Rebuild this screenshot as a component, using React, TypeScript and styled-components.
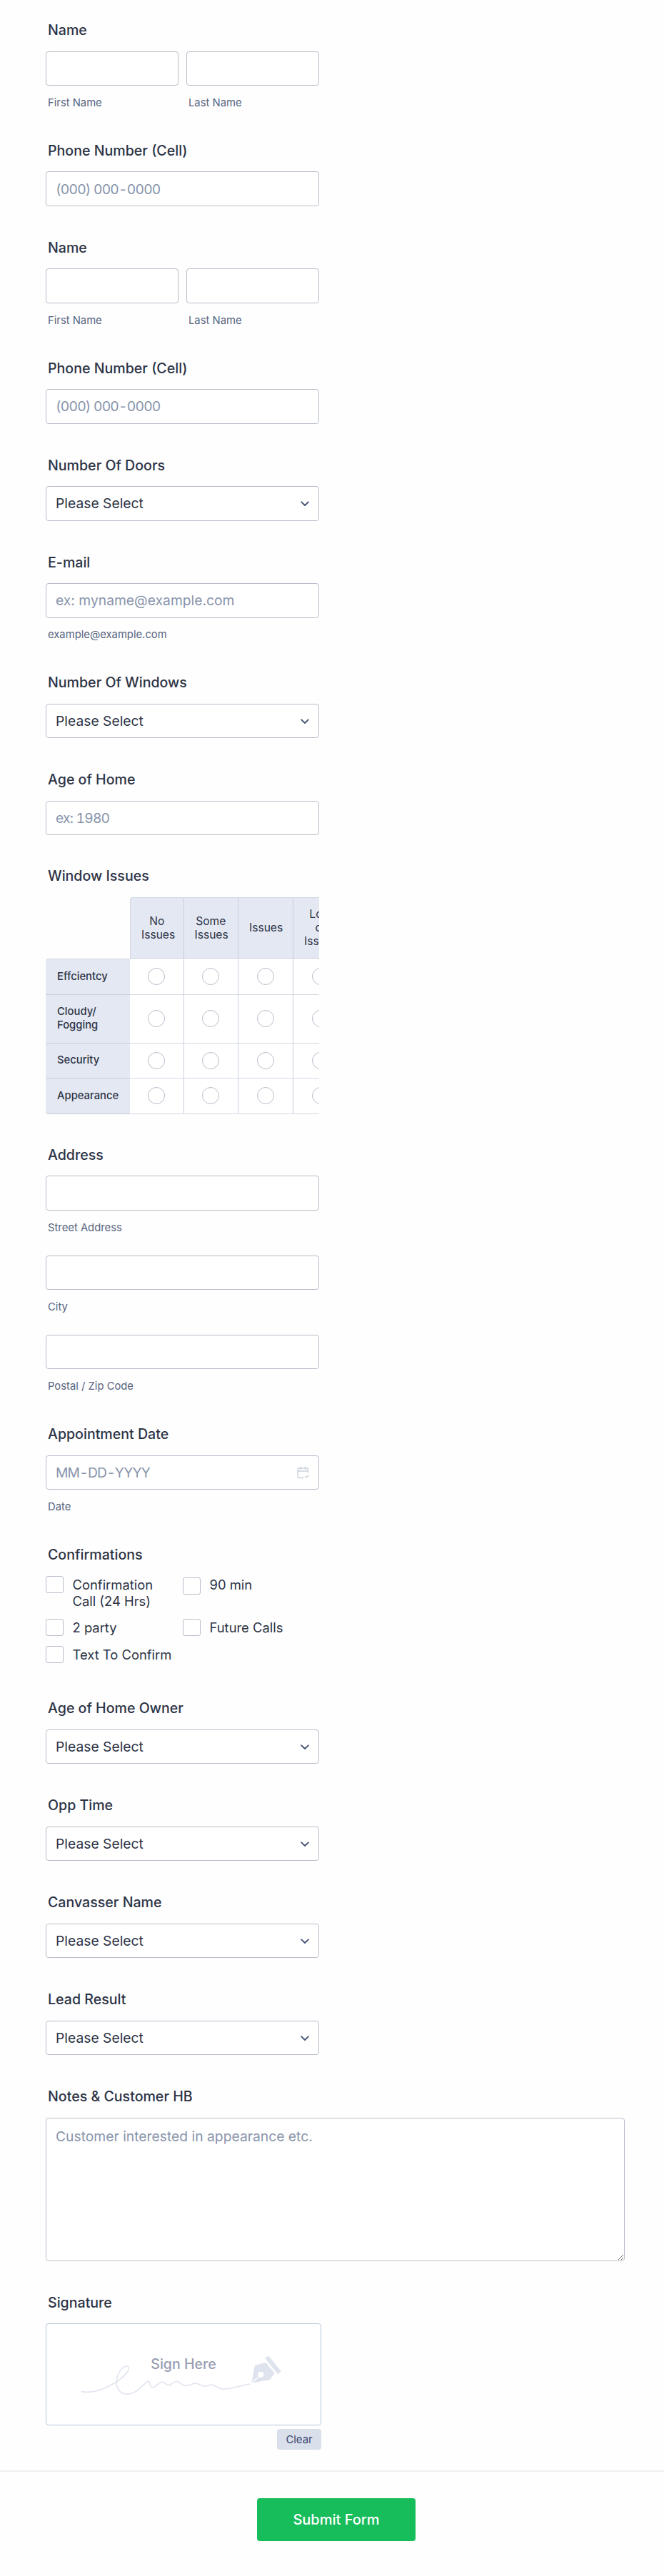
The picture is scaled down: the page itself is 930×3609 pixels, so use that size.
import styled, { createGlobalStyle } from "styled-components";

const GlobalStyle = createGlobalStyle`
  html, body {
    margin: 0;
    padding: 0;
    background: #fff;
  }
  * {
    box-sizing: border-box;
  }
`;

const Chevron = () => (
  <ChevronIcon viewBox="0 0 12 8" fill="none">
    <path d="M1.2 1.4 6 6l4.8-4.6" stroke="#4a5578" strokeWidth="2" strokeLinecap="round" strokeLinejoin="round" />
  </ChevronIcon>
);

const CalendarCheck = () => (
  <CalendarIconWrap viewBox="0 0 17 18" fill="none">
    <path
      d="M15.5 9V4.5a1.5 1.5 0 0 0-1.5-1.5H2.5A1.5 1.5 0 0 0 1 4.5V15a1.5 1.5 0 0 0 1.5 1.5H9M1 7h14.5M5 1v3.5M11.5 1v3.5M11.5 14.5l1.6 1.6 3-3.3"
      stroke="#c9ced9"
      strokeWidth="1.3"
      strokeLinecap="round"
      strokeLinejoin="round"
    />
  </CalendarIconWrap>
);

const SignatureDrawing = () => (
  <SignatureSvg viewBox="340 355 850 175" fill="none">
    <path
      d="M345 510C390 520 440 500 490 470C520 450 550 420 540 405C520 395 495 430 490 465C487 500 510 525 545 520C580 515 600 480 625 465C635 480 630 500 650 490C665 482 672 468 685 470C700 475 705 490 720 480C735 465 750 462 765 480C780 492 800 480 820 475C840 475 850 495 875 485C895 475 905 490 935 500C970 500 1010 485 1050 478"
      stroke="#e1e5ef"
      strokeWidth="5"
      strokeLinecap="round"
    />
    <path d="M1058 474 1072 400 1118 388 1155 432 1135 460Z" fill="#dfe3ee" />
    <path d="M1115 370 1130 360 1183 425 1168 437Z" fill="#dfe3ee" />
    <circle cx="1097" cy="438" r="12" fill="#fff" />
    <path d="M1060 472 1092 444" stroke="#fff" strokeWidth="4" />
  </SignatureSvg>
);

const NameRow = () => (
  <Columns>
    <div>
      <TextInput />
      <SubLabel>First Name</SubLabel>
    </div>
    <div>
      <TextInput />
      <SubLabel>Last Name</SubLabel>
    </div>
  </Columns>
);

const PleaseSelect = ({ title }: { title: string }) => (
  <Field>
    <Label>{title}</Label>
    <SelectWrap>
      <SelectBox defaultValue="">
        <option value="">Please Select</option>
      </SelectBox>
      <Chevron />
    </SelectWrap>
  </Field>
);

const columns = ["No Issues", "Some Issues", "Issues", "Lots of Issues"];
const rows = ["Effcientcy", "Cloudy/ Fogging", "Security", "Appearance"];
const rowHeights = [51, 68, 49, 50];

const App = () => {
  return (
    <Page>
      <GlobalStyle />
      <Fields>
        <Field>
          <Label>Name</Label>
          <NameRow />
        </Field>
        <Field>
          <Label>Phone Number (Cell)</Label>
          <TextInput $digits placeholder="(000) 000-0000" />
        </Field>
        <Field>
          <Label>Name</Label>
          <NameRow />
        </Field>
        <Field>
          <Label>Phone Number (Cell)</Label>
          <TextInput $digits placeholder="(000) 000-0000" />
        </Field>
        <PleaseSelect title="Number Of Doors" />
        <Field>
          <Label>E-mail</Label>
          <TextInput placeholder="ex: myname@example.com" />
          <SubLabel>example@example.com</SubLabel>
        </Field>
        <PleaseSelect title="Number Of Windows" />
        <Field>
          <Label>Age of Home</Label>
          <TextInput $digits placeholder="ex: 1980" />
        </Field>

        <Field $tight>
          <Label>Window Issues</Label>
          <MatrixWrap>
            <Matrix>
              <colgroup>
                <col width="118" />
                <col width="75.5" />
                <col width="76.5" />
                <col width="77" />
                <col width="77" />
              </colgroup>
              <thead>
                <tr>
                  <CornerCell />
                  {columns.map((c) => (
                    <HeadCell key={c}>{c}</HeadCell>
                  ))}
                </tr>
              </thead>
              <tbody>
                {rows.map((r, i) => (
                  <MatrixRow key={r} $height={rowHeights[i]}>
                    <RowCell>{r}</RowCell>
                    {columns.map((c) => (
                      <RadioCell key={c}>
                        <Radio type="radio" name={r} />
                      </RadioCell>
                    ))}
                  </MatrixRow>
                ))}
              </tbody>
            </Matrix>
          </MatrixWrap>
        </Field>

        <Field>
          <Label>Address</Label>
          <AddressPart>
            <TextInput />
            <SubLabel>Street Address</SubLabel>
          </AddressPart>
          <AddressPart>
            <TextInput />
            <SubLabel>City</SubLabel>
          </AddressPart>
          <AddressPart>
            <TextInput />
            <SubLabel>Postal / Zip Code</SubLabel>
          </AddressPart>
        </Field>

        <Field>
          <Label>Appointment Date</Label>
          <SelectWrap>
            <TextInput $digits placeholder="MM-DD-YYYY" />
            <CalendarCheck />
          </SelectWrap>
          <SubLabel>Date</SubLabel>
        </Field>

        <Field>
          <Label>Confirmations</Label>
          <CheckGrid>
            <CheckItem>
              <CheckBox />
              <CheckText>Confirmation Call (24 Hrs)</CheckText>
            </CheckItem>
            <CheckItem>
              <CheckBox $nudge />
              <CheckText>90 min</CheckText>
            </CheckItem>
            <CheckItem>
              <CheckBox />
              <CheckText>2 party</CheckText>
            </CheckItem>
            <CheckItem>
              <CheckBox />
              <CheckText>Future Calls</CheckText>
            </CheckItem>
            <CheckItem>
              <CheckBox />
              <CheckText>Text To Confirm</CheckText>
            </CheckItem>
          </CheckGrid>
        </Field>

        <PleaseSelect title="Age of Home Owner" />
        <PleaseSelect title="Opp Time" />
        <PleaseSelect title="Canvasser Name" />
        <PleaseSelect title="Lead Result" />

        <Field>
          <Label>Notes &amp; Customer HB</Label>
          <NotesArea placeholder="Customer interested in appearance etc." />
        </Field>

        <Field $noBottom>
          <Label>Signature</Label>
          <SignPad>
            <SignatureDrawing />
            <SignHint>Sign Here</SignHint>
          </SignPad>
          <ClearRow>
            <ClearButton type="button">Clear</ClearButton>
          </ClearRow>
        </Field>
      </Fields>

      <Footer>
        <SubmitButton type="button">Submit Form</SubmitButton>
      </Footer>
    </Page>
  );
};

export default App;

const Page = styled.div`
  width: 930px;
  height: 3609px;
  overflow: hidden;
  background: #fefefe;
  font-family: "Inter", "Liberation Sans", sans-serif;
  color: #2c3345;
`;

const Fields = styled.div`
  padding: 7px 0 0 64px;
`;

const Field = styled.div<{ $tight?: boolean; $noBottom?: boolean }>`
  width: 383px;
  padding: ${(p) => (p.$tight ? "22px 0 22px" : p.$noBottom ? "23px 0 29px" : "23px 0")};
`;

const Label = styled.div`
  font-size: 19.6px;
  font-weight: 450;
  line-height: 24px;
  margin: 0 0 17.5px 3px;
  white-space: nowrap;
  color: #2c3345;
`;

const Columns = styled.div`
  display: grid;
  grid-template-columns: 186px 186px;
  column-gap: 11px;
`;

const TextInput = styled.input<{ $digits?: boolean }>`
  display: block;
  width: 100%;
  height: 48.5px;
  padding: 0 13px;
  background: #fff;
  border: 1px solid #b8bdc9;
  border-radius: 4px;
  font-family: inherit;
  font-size: 19.3px;
  font-variant-numeric: ${(p) => (p.$digits ? "tabular-nums" : "normal")};
  letter-spacing: ${(p) => (p.$digits ? "-0.8px" : "normal")};
  color: #2c3345;
  outline: none;

  &::placeholder {
    color: #8894ab;
    opacity: 1;
  }
`;

const SubLabel = styled.div`
  margin: 15.8px 0 0 3px;
  font-size: 14.8px;
  line-height: 17px;
  color: #57647e;
  white-space: nowrap;
`;

const SelectWrap = styled.div`
  position: relative;
  width: 100%;
`;

const SelectBox = styled.select`
  display: block;
  width: 100%;
  height: 48.5px;
  padding: 0 13px;
  background: #fff;
  border: 1px solid #b8bdc9;
  border-radius: 4px;
  font-family: inherit;
  font-size: 19.3px;
  color: #2c3345;
  appearance: none;
  outline: none;
`;

const ChevronIcon = styled.svg`
  position: absolute;
  top: 21px;
  right: 14px;
  width: 12px;
  height: 8px;
`;

const CalendarIconWrap = styled.svg`
  position: absolute;
  top: 15.5px;
  right: 14.5px;
  width: 17px;
  height: 18px;
`;

const MatrixWrap = styled.div`
  width: 383px;
  margin-top: 3px;
  overflow: hidden;
`;

const Matrix = styled.table`
  width: 424px;
  table-layout: fixed;
  border-collapse: separate;
  border-spacing: 0;
  font-size: 15.6px;
  line-height: 19px;
  color: #2c3345;
`;

const CornerCell = styled.th`
  height: 86px;
  padding: 0;
  background: transparent;
`;

const HeadCell = styled.th`
  height: 86px;
  padding: 0 15px;
  background: #e4e8f3;
  border-top: 1px solid #d3d7e3;
  border-right: 1px solid #c9cedb;
  border-bottom: 1px solid #c9cedb;
  font-weight: 400;
  text-align: center;

  &:nth-child(2) {
    border-top-left-radius: 4px;
    border-left: 1px solid #d3d7e3;
  }
`;

const MatrixRow = styled.tr<{ $height: number }>`
  height: ${(p) => p.$height}px;
`;

const RowCell = styled.td`
  padding: 0 16px;
  background: #e4e8f3;
  border-bottom: 1px solid #c9cedb;
  font-size: 14.8px;
  font-weight: 500;
  word-spacing: 40px;

  tr:first-child > & {
    border-top-left-radius: 4px;
    border-top: 1px solid #d3d7e3;
  }

  tr:last-child > & {
    border-bottom-left-radius: 4px;
  }
`;

const RadioCell = styled.td`
  padding: 0;
  text-align: center;
  background: #fff;
  border-right: 1px solid #c9cedb;
  border-bottom: 1px solid #d3d7e3;
`;

const Radio = styled.input`
  display: block;
  width: 24px;
  height: 24px;
  margin: 0 auto;
  appearance: none;
  background: #fff;
  border: 1px solid #b8bdc9;
  border-radius: 50%;
`;

const AddressPart = styled.div`
  & + & {
    margin-top: 30px;
  }
`;

const CheckGrid = styled.div`
  display: grid;
  grid-template-columns: 192px 191px;
  row-gap: 13.5px;
  padding-bottom: 5px;
`;

const CheckItem = styled.label`
  display: flex;
  align-items: flex-start;
  gap: 13px;
  padding-right: 14px;
`;

const CheckBox = styled.span<{ $nudge?: boolean }>`
  flex: none;
  width: 24.5px;
  height: 24.5px;
  margin-top: ${(p) => (p.$nudge ? "2px" : "0")};
  background: #fff;
  border: 1px solid #b8bdc9;
  border-radius: 3px;
`;

const CheckText = styled.span`
  padding-top: 1.5px;
  font-size: 18.4px;
  line-height: 22.6px;
  color: #2c3345;
`;

const NotesArea = styled.textarea`
  display: block;
  width: 811px;
  height: 201px;
  padding: 12px 13px;
  background: #fff;
  border: 1px solid #b8bdc9;
  border-radius: 4px;
  font-family: inherit;
  font-size: 19.3px;
  line-height: 26px;
  color: #2c3345;
  outline: none;

  &::placeholder {
    color: #8894ab;
    opacity: 1;
  }
`;

const SignPad = styled.div`
  position: relative;
  display: flex;
  align-items: center;
  justify-content: center;
  width: 386px;
  height: 143px;
  padding-bottom: 30px;
  background: #fff;
  border: 1px solid #b5c5dd;
  border-radius: 4px;
`;

const SignatureSvg = styled.svg`
  position: absolute;
  left: 48px;
  top: 42.5px;
  width: 283.3px;
  height: 58.3px;
`;

const SignHint = styled.span`
  position: relative;
  font-size: 19.6px;
  font-weight: 450;
  color: #979db3;
`;

const ClearRow = styled.div`
  display: flex;
  justify-content: flex-end;
  width: 386px;
  margin-top: 5px;
`;

const ClearButton = styled.button`
  width: 62px;
  height: 29px;
  padding: 0;
  background: #dadfec;
  border: none;
  border-radius: 4px;
  font-family: inherit;
  font-size: 14.8px;
  color: #34456d;
`;

const Footer = styled.div`
  display: flex;
  justify-content: center;
  padding: 37px 0 0 12px;
  border-top: 2px solid #eeeff3;
`;

const SubmitButton = styled.button`
  width: 222.5px;
  height: 60px;
  background: #18bd5b;
  border: none;
  border-radius: 4px;
  font-family: inherit;
  font-size: 20px;
  font-weight: 500;
  color: #fff;
`;
